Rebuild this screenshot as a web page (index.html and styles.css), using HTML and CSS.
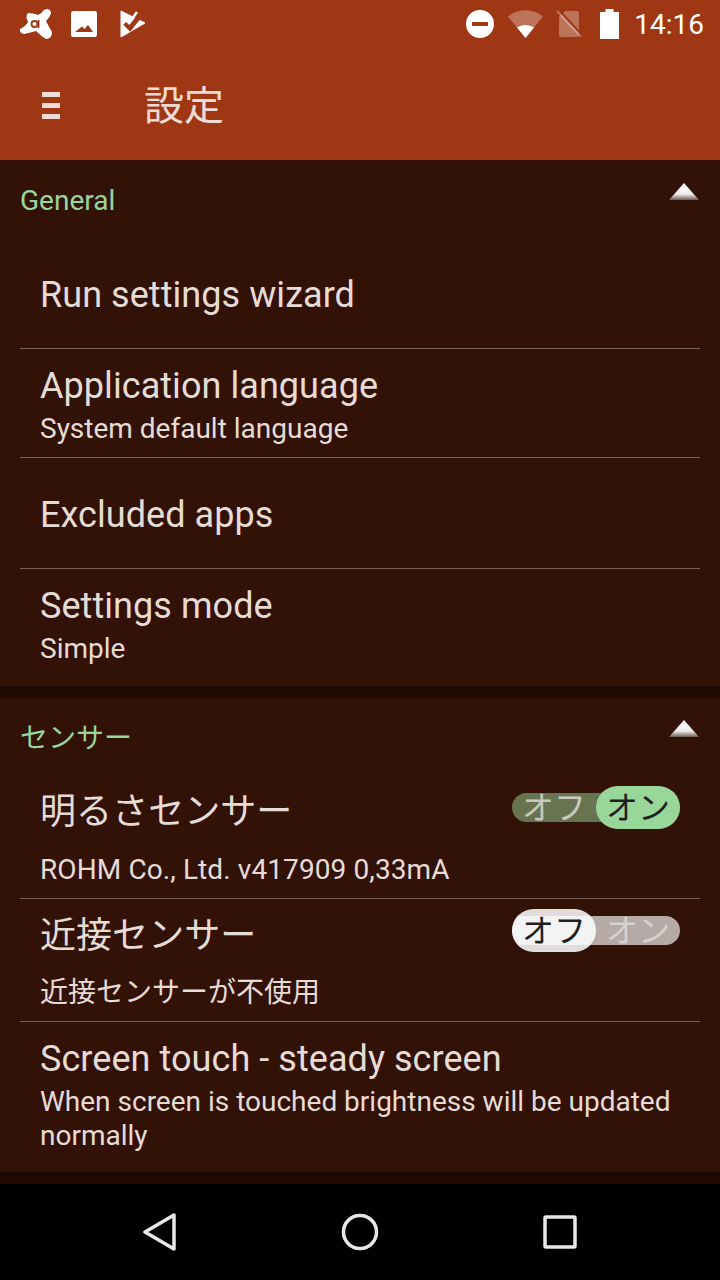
FILE: index.html
```html
<!DOCTYPE html>
<html lang="en">

<head>
    <meta charset="UTF-8">
    <meta name="viewport" content="width=device-width, initial-scale=1.0">
    <title>設定</title>
    <link rel="stylesheet" href="styles.css">
</head>

<body>
    <header class="appbar">
        <div class="status">
            <div class="status-left">
                <!-- avast splat -->
                <svg class="ico-avast" width="34" height="34" viewBox="0 0 34 34">
                    <path fill="#fff" d="M9 6Q14 6 19 8 22 7 25 3 30 0 32 5 32 9 27 14 30 20 33 25 33 32 27 32 22 29 17 24 10 26 5 27 0 26 1 22 6 20 9 15 6 9 9 6z" />
                    <circle cx="15.500" cy="17" r="3" fill="none" stroke="#9f3714" stroke-width="1.800" />
                    <path stroke="#9f3714" stroke-width="1.800" d="M19.500 13v8" />
                </svg>
                <svg class="ico-photo" width="26" height="26" viewBox="0 0 26 26">
                    <path fill="#fff" fill-rule="evenodd" d="M2 0h22a2 2 0 0 1 2 2v22a2 2 0 0 1-2 2H2a2 2 0 0 1-2-2V2a2 2 0 0 1 2-2zM4 21h18l-5-7-3.500 4-2.500-2.500z" />
                </svg>
                <svg class="ico-check" width="26" height="28" viewBox="0 0 26 28">
                    <path fill="#fff" stroke="#fff" stroke-width="1" stroke-linejoin="round" d="M1 1l24 12L1 27z" />
                    <path fill="none" stroke="#9f3714" stroke-width="5" d="M5 13l5 5 12-15" />
                    <path fill="none" stroke="#fff" stroke-width="2.500" d="M5 9l4 4 8-11" />
                </svg>
            </div>
            <div class="status-right">
                <svg class="ico-dnd" width="30" height="30" viewBox="0 0 30 30">
                    <circle cx="15" cy="15" r="14" fill="#fff" />
                    <rect x="7" y="13" width="16" height="4" fill="#9f3714" />
                </svg>
                <svg class="ico-wifi" width="35" height="28" viewBox="0 0 35 28">
                    <path fill="#fff" opacity="0.3" d="M0 6.500C10-2 25-2 35 6.500L17.500 28z" />
                    <path fill="#fff" d="M9 17.500c5-3.500 12-3.500 17 0l-8.500 10.500z" />
                </svg>
                <svg class="ico-sim" width="26" height="28" viewBox="0 0 26 28">
                    <path fill="#fff" opacity="0.3" d="M9 1h12a2 2 0 0 1 2 2v22a2 2 0 0 1-2 2H5a2 2 0 0 1-2-2V7z" />
                    <path stroke="#9f3714" stroke-width="2" d="M3 0l24 26" />
                    <path stroke="#fff" opacity="0.3" stroke-width="2" d="M1 1l24 26" />
                </svg>
                <svg class="ico-batt" width="19" height="30" viewBox="0 0 19 30">
                    <path fill="#fff" d="M5.500 0h8v3H19v27H0V3h5.500z" />
                </svg>
                <span class="clock">14:16</span>
            </div>
        </div>
        <div class="toolbar">
            <div class="menu-btn"><i></i><i></i><i></i></div>
            <h1 class="title">設定</h1>
        </div>
    </header>

    <main>
        <section class="group group-general">
            <div class="group-head">
                <span class="group-name">General</span>
                <span class="arrow"></span>
            </div>
            <div class="row row-single row-first">
                <div class="row-title">Run settings wizard</div>
            </div>
            <div class="row row-double">
                <div class="row-title">Application language</div>
                <div class="row-sub">System default language</div>
            </div>
            <div class="row row-single row-excluded">
                <div class="row-title">Excluded apps</div>
            </div>
            <div class="row row-double row-last">
                <div class="row-title">Settings mode</div>
                <div class="row-sub">Simple</div>
            </div>
        </section>

        <section class="group group-sensor">
            <div class="group-head group-head-sensor">
                <span class="group-name">センサー</span>
                <span class="arrow"></span>
            </div>
            <div class="row row-switch row-light">
                <div class="switch-line">
                    <div class="row-title">明るさセンサー</div>
                    <div class="switch switch-on">
                        <span class="sw-off">オフ</span>
                        <span class="sw-on">オン</span>
                    </div>
                </div>
                <div class="row-sub">ROHM Co., Ltd. v417909 0,33mA</div>
            </div>
            <div class="row row-switch row-prox">
                <div class="switch-line">
                    <div class="row-title">近接センサー</div>
                    <div class="switch switch-off">
                        <span class="sw-off">オフ</span>
                        <span class="sw-on">オン</span>
                    </div>
                </div>
                <div class="row-sub">近接センサーが不使用</div>
            </div>
            <div class="row row-last row-touch">
                <div class="row-title">Screen touch - steady screen</div>
                <div class="row-sub">When screen is touched brightness will be updated normally</div>
            </div>
        </section>
    </main>

    <nav class="navbar">
        <svg width="34" height="38" viewBox="0 0 34 38">
            <path fill="none" stroke="#e8e8e8" stroke-width="3.500" stroke-linejoin="round" d="M31 2v34L2 19z" />
        </svg>
        <svg width="38" height="38" viewBox="0 0 38 38">
            <circle cx="19" cy="19" r="16.500" fill="none" stroke="#e8e8e8" stroke-width="3.500" />
        </svg>
        <svg width="34" height="34" viewBox="0 0 34 34">
            <rect x="2" y="2" width="30" height="30" rx="1" fill="none" stroke="#e8e8e8" stroke-width="3.500" />
        </svg>
    </nav>
</body>

</html>
```

FILE: styles.css
```css
html,
body {
    margin: 0;
    padding: 0;
}

body {
    width: 720px;
    height: 1280px;
    overflow: hidden;
    background-color: #000;
    font-family: 'Roboto', 'Noto Sans CJK JP', sans-serif;
    color: #e6dcd6;
    display: flex;
    flex-direction: column;
}

/* top bar */
.appbar {
    height: 160px;
    background-color: #9f3714;
}

.status {
    height: 48px;
    display: flex;
    justify-content: space-between;
    align-items: center;
}

.status-left {
    display: flex;
    align-items: center;
    padding-left: 19px;
}

.status-left svg {
    display: block;
}

.ico-photo {
    margin-left: 18px;
}

.ico-check {
    margin-left: 23px;
}

.status-right {
    display: flex;
    align-items: center;
    padding-right: 16px;
}

.status-right svg {
    display: block;
}

.ico-wifi {
    margin-left: 13px;
}

.ico-sim {
    margin-left: 13px;
}

.ico-batt {
    margin-left: 18px;
}

.clock {
    margin-left: 15px;
    font-size: 28px;
    color: #fff;
}

.toolbar {
    height: 112px;
    display: flex;
    align-items: center;
}

.menu-btn {
    width: 18px;
    margin: 3px 0 0 42px;
    display: flex;
    flex-direction: column;
    gap: 6px;
}

.menu-btn i {
    display: block;
    height: 5px;
    background-color: #eedcd5;
}

.title {
    margin: 6px 0 0 84px;
    font-size: 40px;
    line-height: 56px;
    font-weight: 400;
    color: #eedcd5;
}

/* lists */
main {
    height: 1024px;
    background-color: #230b04;
}

.group {
    background-color: #321107;
    padding: 0 20px;
}

.group-general {
    height: 526px;
    box-shadow: 0 3px 0 #1b0703;
}

.group-sensor {
    height: 474px;
    margin-top: 12px;
    box-shadow: 0 3px 0 #1b0703;
}

.group-head {
    height: 80px;
    display: flex;
    justify-content: space-between;
    align-items: center;
}

.group-head-sensor {
    height: 76px;
}

.group-name {
    font-size: 28px;
    color: #98d69a;
}

.arrow {
    width: 30px;
    height: 17px;
    margin: 0 1px 17px 0;
    clip-path: polygon(50% 0, 100% 100%, 0 100%);
    background: linear-gradient(#fff 0, #f0eeec 65%, #6d5a54 100%);
}

.group-head-sensor .arrow {
    margin-bottom: 15px;
}

.row {
    padding: 0 20px;
    border-bottom: 1px solid #785f57;
}

.row-last {
    border-bottom: 0;
}

.row-single {
    display: flex;
    align-items: center;
}

.row-first {
    height: 106px;
    padding-top: 2px;
}

.row-excluded {
    height: 106px;
    padding-top: 4px;
}

.row-double {
    height: 102px;
    padding-top: 6px;
    display: flex;
    flex-direction: column;
    justify-content: center;
}

.row-title {
    font-size: 36px;
    line-height: 42px;
    letter-spacing: 0.06px;
}

.row-sub {
    font-size: 28px;
    line-height: 38px;
}

.row-double .row-sub {
    margin-top: 3px;
}

.row-last.row-double {
    height: 117px;
    justify-content: flex-start;
    padding-top: 16px;
    box-sizing: border-box;
}

/* sensor rows */
.row-switch {
    box-sizing: border-box;
}

.row-light {
    height: 125px;
}

.row-prox {
    height: 123px;
}

.switch-line {
    display: flex;
    justify-content: space-between;
    align-items: flex-start;
}

.row-light .switch-line {
    height: 68px;
}

.row-prox .switch-line {
    height: 70px;
}

.row-light .row-title {
    margin-top: 17px;
}

.row-prox .row-title {
    margin-top: 16px;
}

.row-light .switch {
    margin-top: 19px;
}

.row-prox .switch {
    margin-top: 17px;
}

.row-light .row-sub {
    margin-top: 9px;
    letter-spacing: 0.1px;
}

.row-prox .row-sub {
    margin-top: 5px;
}

.row-touch {
    padding-top: 16px;
}

.row-touch .row-sub {
    line-height: 34px;
    margin-top: 5px;
}

.switch {
    width: 168px;
    height: 29px;
    border-radius: 15px;
    display: flex;
    font-size: 32px;
}

.switch span {
    width: 84px;
    height: 43px;
    margin-top: -7px;
    line-height: 45px;
    text-align: center;
    border-radius: 22px;
}

.switch-on {
    background-color: #68744f;
}

.switch-on .sw-off {
    color: #c9c9c0;
}

.switch-on .sw-on {
    background-color: #98d69a;
    color: #1f1f1f;
}

.switch-off {
    background-color: #b5aaa6;
}

.switch-off .sw-off {
    background: linear-gradient(#e3dcdc 7px, #f4f3f3 7px, #f4f3f3 36px, #e3dcdc 36px);
    color: #1f1f1f;
}

.switch-off .sw-on {
    color: #d8d2cf;
}

/* android nav */
.navbar {
    height: 96px;
    background-color: #000;
    display: flex;
    align-items: center;
    justify-content: space-between;
    padding: 0 143px;
}
```
